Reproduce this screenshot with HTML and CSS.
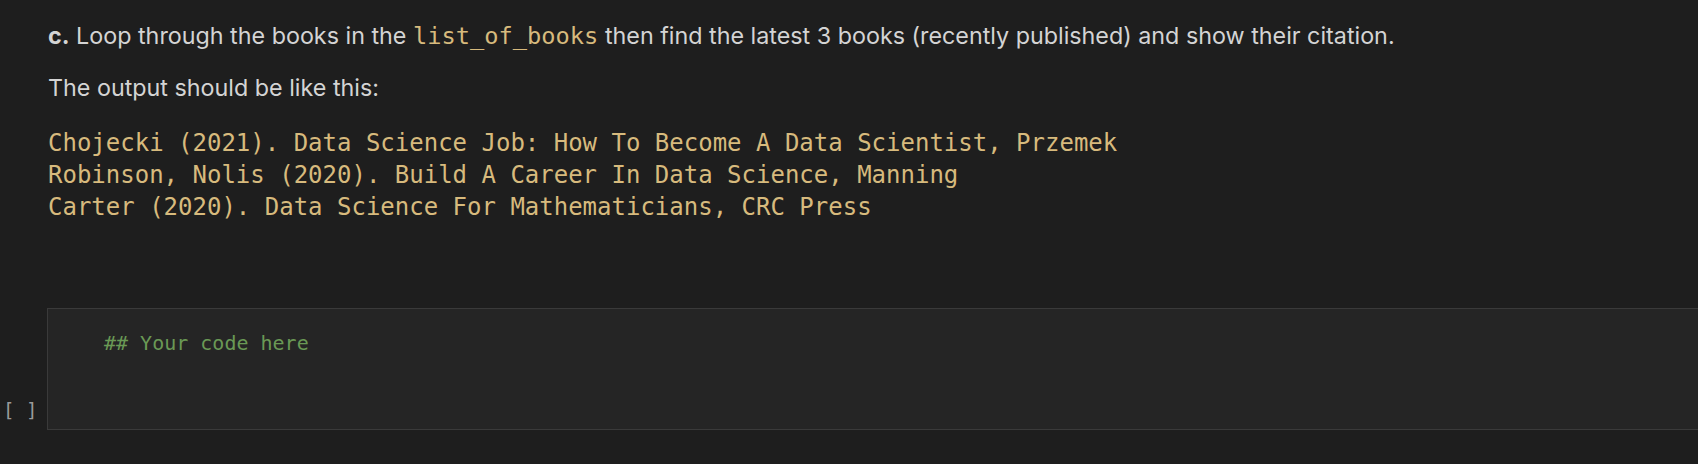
FILE: index.html
```html
<!DOCTYPE html>
<html lang="en">
<head>
<meta charset="utf-8">
<title>Notebook cell</title>
<link rel="stylesheet" href="styles.css">
</head>
<body>
  <section class="md">
    <p class="para"><b>c.</b> Loop through the books in the <code class="inline">list_of_books</code> then find the latest 3 books (recently published) and show their citation.</p>
    <p class="para second">The output should be like this:</p>
    <pre class="output">Chojecki (2021). Data Science Job: How To Become A Data Scientist, Przemek
Robinson, Nolis (2020). Build A Career In Data Science, Manning
Carter (2020). Data Science For Mathematicians, CRC Press</pre>
  </section>
  <section class="cell">
    <div class="gutter"><span class="run">[ ]</span></div>
    <div class="editor"><span class="comment">## Your code here</span></div>
  </section>
</body>
</html>
```
FILE: styles.css
```css
html, body {
  margin: 0;
  background: #1e1e1e;
}
body {
  width: 1698px;
  height: 464px;
  overflow: hidden;
}
.md {
  padding: 21px 0 0 48px;
  color: #d4d4d4;
  font-family: Inter, "Liberation Sans", sans-serif;
  font-size: 23.3px;
}
.para {
  margin: 0;
  line-height: 30px;
}
.para b {
  font-weight: 700;
}
.second {
  margin-top: 22px;
}
.inline {
  font-family: "DejaVu Sans Mono", monospace;
  font-size: 23.7px;
  color: #d7ba7d;
}
.output {
  margin: 24px 0 0 0;
  font-family: "DejaVu Sans Mono", monospace;
  font-size: 24px;
  line-height: 32px;
  color: #d7ba7d;
}
.cell {
  display: flex;
  margin-top: 85px;
}
.gutter {
  width: 47px;
  flex: none;
  display: flex;
  align-items: flex-end;
  padding-bottom: 8px;
  box-sizing: border-box;
}
.run {
  padding-left: 3px;
  font-family: "DejaVu Sans Mono", monospace;
  font-size: 19px;
  line-height: 24px;
  color: #9a9a9a;
}
.editor {
  flex: 1;
  height: 122px;
  background: #252525;
  border: 1px solid #3a3a3a;
  border-right: none;
  padding: 22px 0 0 56px;
  box-sizing: border-box;
}
.comment {
  font-family: "DejaVu Sans Mono", monospace;
  font-size: 20px;
  line-height: 24px;
  color: #6a9955;
}
```
